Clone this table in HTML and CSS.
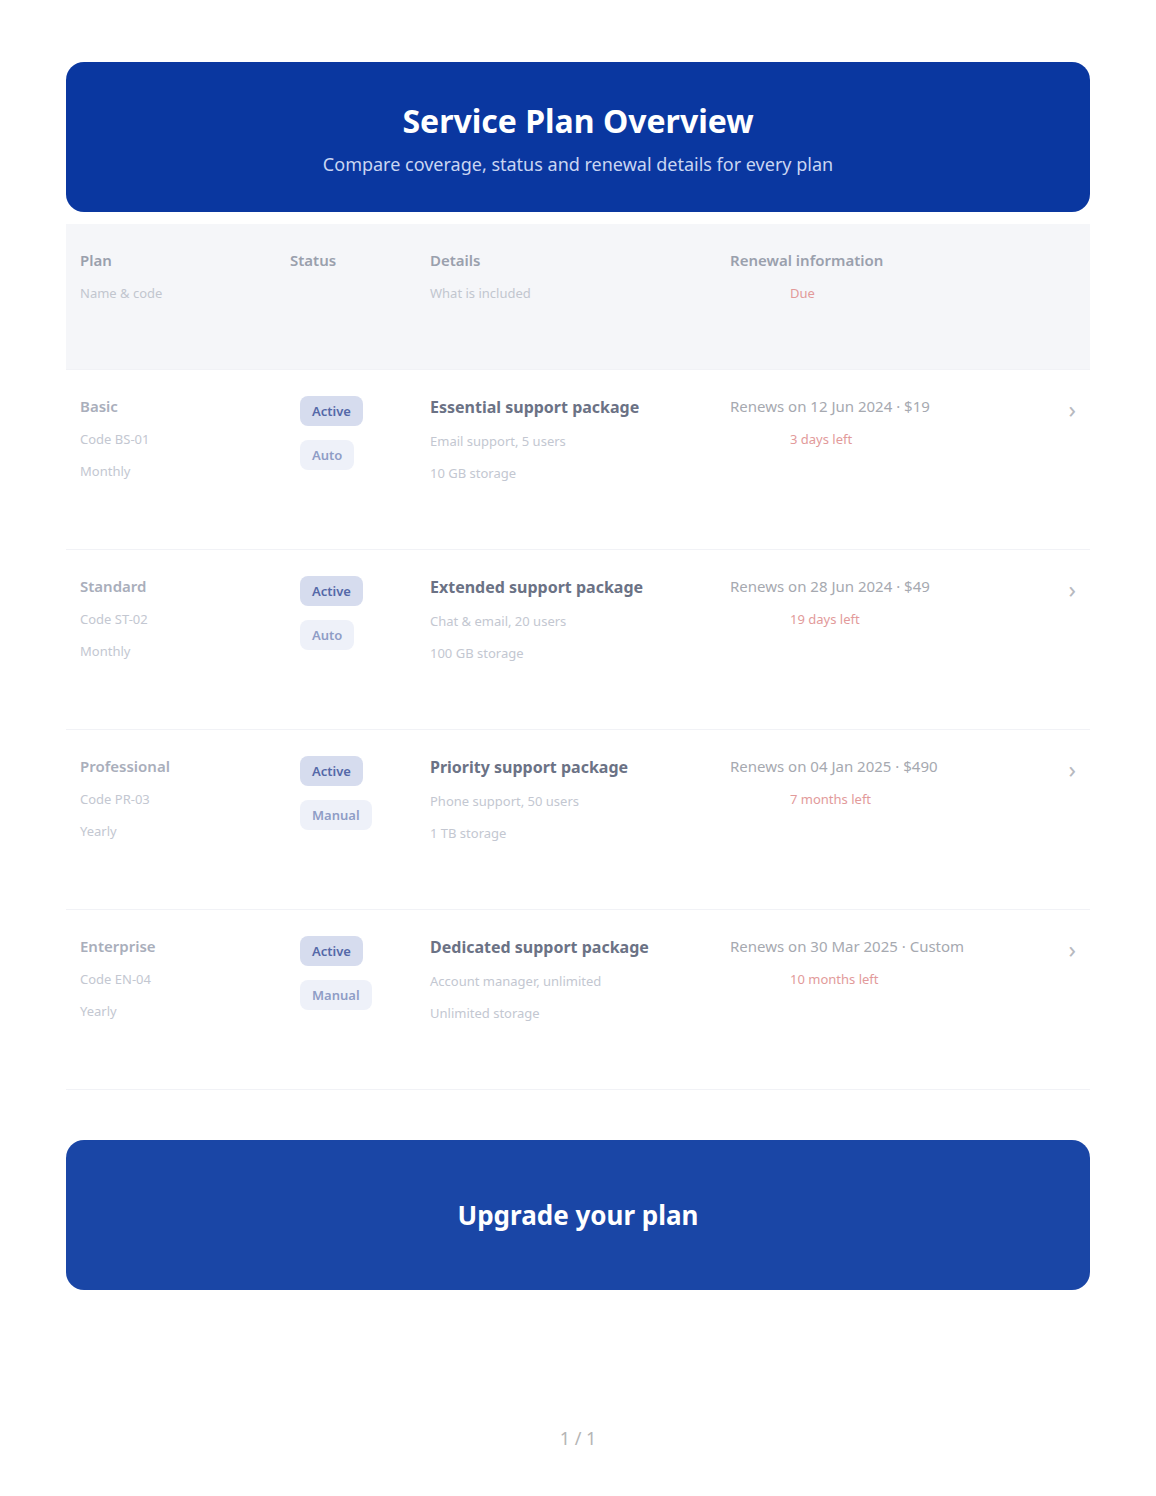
FILE: index.html
```html
<!DOCTYPE html>
<html lang="en">
<head>
<meta charset="utf-8">
<title>Service Plan Overview</title>
<link rel="stylesheet" href="styles.css">
</head>
<body>
<div class="page">
  <header class="banner">
    <div class="banner-mark"></div>
    <div class="banner-text">
      <h1>Service Plan Overview</h1>
      <p>Compare coverage, status and renewal details for every plan</p>
    </div>
    <div class="banner-mark right"></div>
  </header>

  <section class="table">
    <div class="row head">
      <div class="cell c1"><span class="label">Plan</span><span class="sub">Name &amp; code</span></div>
      <div class="cell c2"><span class="label">Status</span></div>
      <div class="cell c3"><span class="label">Details</span><span class="sub">What is included</span></div>
      <div class="cell c4"><span class="label">Renewal information</span><span class="warn">Due</span></div>
    </div>

    <div class="row">
      <div class="cell c1"><span class="name">Basic</span><span class="meta">Code BS-01</span><span class="meta">Monthly</span></div>
      <div class="cell c2"><span class="badge">Active</span><span class="badge soft">Auto</span></div>
      <div class="cell c3"><span class="title">Essential support package</span><span class="meta">Email support, 5 users</span><span class="meta">10 GB storage</span></div>
      <div class="cell c4"><span class="info">Renews on 12 Jun 2024 · $19</span><span class="warn">3 days left</span><span class="chev">›</span></div>
    </div>

    <div class="row">
      <div class="cell c1"><span class="name">Standard</span><span class="meta">Code ST-02</span><span class="meta">Monthly</span></div>
      <div class="cell c2"><span class="badge">Active</span><span class="badge soft">Auto</span></div>
      <div class="cell c3"><span class="title">Extended support package</span><span class="meta">Chat &amp; email, 20 users</span><span class="meta">100 GB storage</span></div>
      <div class="cell c4"><span class="info">Renews on 28 Jun 2024 · $49</span><span class="warn">19 days left</span><span class="chev">›</span></div>
    </div>

    <div class="row">
      <div class="cell c1"><span class="name">Professional</span><span class="meta">Code PR-03</span><span class="meta">Yearly</span></div>
      <div class="cell c2"><span class="badge">Active</span><span class="badge soft">Manual</span></div>
      <div class="cell c3"><span class="title">Priority support package</span><span class="meta">Phone support, 50 users</span><span class="meta">1 TB storage</span></div>
      <div class="cell c4"><span class="info">Renews on 04 Jan 2025 · $490</span><span class="warn">7 months left</span><span class="chev">›</span></div>
    </div>

    <div class="row">
      <div class="cell c1"><span class="name">Enterprise</span><span class="meta">Code EN-04</span><span class="meta">Yearly</span></div>
      <div class="cell c2"><span class="badge">Active</span><span class="badge soft">Manual</span></div>
      <div class="cell c3"><span class="title">Dedicated support package</span><span class="meta">Account manager, unlimited</span><span class="meta">Unlimited storage</span></div>
      <div class="cell c4"><span class="info">Renews on 30 Mar 2025 · Custom</span><span class="warn">10 months left</span><span class="chev">›</span></div>
    </div>
  </section>

  <button class="cta">Upgrade your plan</button>

  <footer class="pager">1 / 1</footer>
</div>
</body>
</html>
```

FILE: styles.css
```css
* { box-sizing: border-box; }
html, body { margin: 0; padding: 0; background: #ffffff; }
body { font-family: "Noto Sans", "Liberation Sans", sans-serif; color: #333; }

.page {
  width: 1156px;
  padding: 62px 66px 40px;
  display: flex;
  flex-direction: column;
}

.banner {
  height: 150px;
  background: #0a37a0;
  border-radius: 18px;
  display: flex;
  align-items: center;
  padding: 0 24px;
  gap: 20px;
}
.banner-mark { width: 160px; height: 100px; }
.banner-text { flex: 1; color: #fff; text-align: center; }
.banner-text h1 { margin: 0 0 10px; font-size: 32px; font-weight: 700; }
.banner-text p { margin: 0; font-size: 18px; color: #c9d5f2; }

.table { margin-top: 12px; display: flex; flex-direction: column; }
.row {
  display: grid;
  grid-template-columns: 212px 140px 300px 1fr;
  height: 180px;
  border-bottom: 1px solid #f1f2f6;
}
.row.head { height: 146px; background: #f5f6f9; }
.cell { padding: 26px 12px; display: flex; flex-direction: column; gap: 14px; position: relative; }
.c1 { padding-left: 14px; }

.label { font-size: 15px; font-weight: 600; color: #9aa0ad; }
.sub { font-size: 13px; color: #c2c6cf; }
.name { font-size: 15px; color: #a9aebb; font-weight: 600; }
.meta { font-size: 13px; color: #c3c7d1; }
.title { font-size: 16px; font-weight: 700; color: #6b7285; }
.info { font-size: 15px; color: #a6a9b0; }
.warn { font-size: 13px; color: #e29a9a; margin-left: 60px; }
.chev { position: absolute; right: 14px; top: 22px; font-size: 24px; color: #b7b9bf; }

.badge {
  align-self: flex-start;
  margin-left: 10px;
  padding: 6px 12px;
  border-radius: 8px;
  background: #d6dcee;
  color: #5468a8;
  font-size: 13px;
  font-weight: 600;
}
.badge.soft { background: #eef1f9; color: #8f9dc6; }

.cta {
  margin-top: 50px;
  height: 150px;
  border: none;
  border-radius: 18px;
  background: #1a46a6;
  color: #ffffff;
  font-family: inherit;
  font-size: 26px;
  font-weight: 700;
}

.pager {
  margin-top: 136px;
  text-align: center;
  font-size: 18px;
  color: #b5b5b5;
}
```
